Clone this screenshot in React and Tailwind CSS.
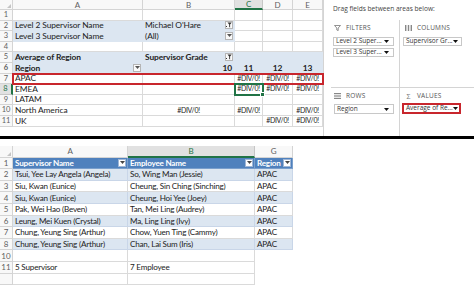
import React from "react";

function Cell({ w, cls = "", children }) {
  return (
    <div
      className={`${w} shrink-0 h-full border-r border-b flex items-center whitespace-nowrap leading-none ${cls}`}
    >
      {children}
    </div>
  );
}

function Hd({ w, sel, children }) {
  return sel ? (
    <Cell w={w} cls="justify-center bg-[#E1E1E1] border-r-[#C6C6C6] border-b-2 border-b-[#217346] text-[#217346] text-[8px]">
      {children}
    </Cell>
  ) : (
    <Cell w={w} cls="justify-center bg-[#F8F8F8] border-[#D4D4D4] text-[#5f5f5f] text-[8px]">
      {children}
    </Cell>
  );
}

function Corner() {
  return (
    <div className="w-[13px] shrink-0 h-full border-r border-b border-[#D4D4D4] bg-[#F8F8F8] flex items-end justify-end p-[1px]">
      <svg width="4" height="4" viewBox="0 0 4 4">
        <path d="M4 0V4H0z" fill="#C4C4C4" />
      </svg>
    </div>
  );
}

function RN({ n, sel, size = "text-[7.5px]" }) {
  return sel ? (
    <Cell w="w-[13px]" cls={`justify-center tracking-normal bg-[#E1E1E1] border-b-[#C6C6C6] border-r-2 border-r-[#217346] text-[#217346] ${size}`}>
      {n}
    </Cell>
  ) : (
    <Cell w="w-[13px]" cls={`justify-center tracking-normal bg-[#F8F8F8] border-[#D4D4D4] text-[#5f5f5f] ${size}`}>
      {n}
    </Cell>
  );
}

function Arrow({ color = "#333" }) {
  return (
    <svg width="5" height="3" viewBox="0 0 5 3">
      <path d="M0 0H5L2.5 3z" fill={color} />
    </svg>
  );
}

function DropBtn() {
  return (
    <span className="ml-auto mr-[1px] w-[8px] h-[8px] border border-[#B5B5B5] bg-[#FAFAFA] flex items-center justify-center">
      <Arrow color="#555" />
    </span>
  );
}

function FilterBtn() {
  return (
    <span className="ml-auto mr-[1px] w-[8px] h-[8px] border border-[#B5B5B5] bg-[#FAFAFA] flex items-center justify-center">
      <svg width="6" height="6" viewBox="0 0 6 6">
        <rect x="0" y="4" width="1" height="1" fill="#333" />
        <path d="M1.5 0.5H5.8L4.1 2.6V5.5L3.2 5V2.6z" fill="#333" />
      </svg>
    </span>
  );
}

const PL = "border-[#DADADA]";
const PV = "bg-[#DCE6F1] border-[#DCE6F1]";
const ERR = "#DIV/0!";
const EC = "justify-center text-[7px] tracking-[-0.3px]";

function TopSheet() {
  return (
    <div className="w-[323px] shrink-0 flex flex-col text-[8.4px] tracking-[-0.1px] text-[#222]">
      <div className="flex h-[10px]">
        <Corner />
        <Hd w="w-[130px]">A</Hd>
        <Hd w="w-[92px]">B</Hd>
        <Hd w="w-[28px]" sel>C</Hd>
        <Hd w="w-[30px]">D</Hd>
        <Hd w="w-[30px]">E</Hd>
      </div>
      <div className="flex h-[10.6px]">
        <RN n="1" />
        <Cell w="w-[130px]" cls={PL} />
        <Cell w="w-[92px]" cls={PL} />
        <Cell w="w-[28px]" cls={PL} />
        <Cell w="w-[30px]" cls={PL} />
        <Cell w="w-[30px]" cls={PL} />
      </div>
      <div className="flex h-[10.6px]">
        <RN n="2" />
        <Cell w="w-[130px]" cls={`${PV} pl-[2px]`}>Level 2 Supervisor Name</Cell>
        <Cell w="w-[92px]" cls={`${PV} pl-[2px]`}>
          Michael O'Hare
          <FilterBtn />
        </Cell>
        <Cell w="w-[28px]" cls={PL} />
        <Cell w="w-[30px]" cls={PL} />
        <Cell w="w-[30px]" cls={PL} />
      </div>
      <div className="flex h-[10.6px]">
        <RN n="3" />
        <Cell w="w-[130px]" cls={`${PV} pl-[2px]`}>Level 3 Supervisor Name</Cell>
        <Cell w="w-[92px]" cls={`${PV} pl-[2px]`}>
          (All)
          <DropBtn />
        </Cell>
        <Cell w="w-[28px]" cls={PL} />
        <Cell w="w-[30px]" cls={PL} />
        <Cell w="w-[30px]" cls={PL} />
      </div>
      <div className="flex h-[10.6px]">
        <RN n="4" />
        <Cell w="w-[130px]" cls={PL} />
        <Cell w="w-[92px]" cls={PL} />
        <Cell w="w-[28px]" cls={PL} />
        <Cell w="w-[30px]" cls={PL} />
        <Cell w="w-[30px]" cls={PL} />
      </div>
      <div className="flex h-[10.6px]">
        <RN n="5" />
        <Cell w="w-[130px]" cls={`${PV} pl-[2px] font-bold`}>Average of Region</Cell>
        <Cell w="w-[92px]" cls={`${PV} pl-[2px] font-bold`}>
          Supervisor Grade
          <FilterBtn />
        </Cell>
        <Cell w="w-[28px]" cls={PV} />
        <Cell w="w-[30px]" cls={PV} />
        <Cell w="w-[30px]" cls={PV} />
      </div>
      <div className="flex h-[10.6px] font-bold">
        <RN n="6" />
        <Cell w="w-[130px]" cls={`${PV} pl-[2px]`}>
          Region
          <DropBtn />
        </Cell>
        <Cell w="w-[92px]" cls={`${PV} justify-end pr-[2px]`}>10</Cell>
        <Cell w="w-[28px]" cls={`${PV} justify-center`}>11</Cell>
        <Cell w="w-[30px]" cls={`${PV} justify-center`}>12</Cell>
        <Cell w="w-[30px]" cls={`${PV} justify-center`}>13</Cell>
      </div>
      <div className="flex h-[10.6px]">
        <RN n="7" />
        <div className="relative flex h-full outline-2 outline-[#C8262D] -outline-offset-1">
          <Cell w="w-[130px]" cls={`${PL} pl-[2px]`}>APAC</Cell>
          <Cell w="w-[92px]" cls={PL} />
          <Cell w="w-[28px]" cls={`${PL} ${EC}`}>{ERR}</Cell>
          <Cell w="w-[30px]" cls={`${PL} ${EC}`}>{ERR}</Cell>
          <Cell w="w-[30px]" cls={`${PL} ${EC}`}>{ERR}</Cell>
        </div>
      </div>
      <div className="flex h-[10.6px]">
        <RN n="8" sel />
        <Cell w="w-[130px]" cls={`${PL} pl-[2px]`}>EMEA</Cell>
        <Cell w="w-[92px]" cls={PL} />
        <Cell w="w-[28px]" cls={`${PL} relative ${EC} outline-2 outline-[#217346] -outline-offset-1`}>
          {ERR}
          <span className="absolute right-[-3px] bottom-[-3px] w-[5px] h-[5px] bg-[#217346] border border-white" />
        </Cell>
        <Cell w="w-[30px]" cls={`${PL} ${EC}`}>{ERR}</Cell>
        <Cell w="w-[30px]" cls={`${PL} ${EC}`}>{ERR}</Cell>
      </div>
      <div className="flex h-[10.6px]">
        <RN n="9" />
        <Cell w="w-[130px]" cls={`${PL} pl-[2px]`}>LATAM</Cell>
        <Cell w="w-[92px]" cls={PL} />
        <Cell w="w-[28px]" cls={PL} />
        <Cell w="w-[30px]" cls={PL} />
        <Cell w="w-[30px]" cls={PL} />
      </div>
      <div className="flex h-[10.6px]">
        <RN n="10" />
        <Cell w="w-[130px]" cls={`${PL} pl-[2px]`}>North America</Cell>
        <Cell w="w-[92px]" cls={`${PL} ${EC}`}>{ERR}</Cell>
        <Cell w="w-[28px]" cls={`${PL} ${EC}`}>{ERR}</Cell>
        <Cell w="w-[30px]" cls={PL} />
        <Cell w="w-[30px]" cls={`${PL} ${EC}`}>{ERR}</Cell>
      </div>
      <div className="flex h-[10.6px]">
        <RN n="11" />
        <Cell w="w-[130px]" cls={`${PL} pl-[2px]`}>UK</Cell>
        <Cell w="w-[92px]" cls={PL} />
        <Cell w="w-[28px]" cls={PL} />
        <Cell w="w-[30px]" cls={`${PL} ${EC}`}>{ERR}</Cell>
        <Cell w="w-[30px]" cls={`${PL} ${EC}`}>{ERR}</Cell>
      </div>
    </div>
  );
}

function FieldBox({ children, cls }) {
  return (
    <div className={`h-[9px] bg-white flex items-center pl-[2px] pr-[4px] text-[6.5px] leading-none text-[#333] whitespace-nowrap ${cls}`}>
      <span>{children}</span>
      <span className="ml-auto">
        <Arrow color="#111" />
      </span>
    </div>
  );
}

function Heading({ icon, children }) {
  return (
    <div className="h-[10px] flex items-center gap-[5px] text-[6.5px] leading-none text-[#555] tracking-[0.2px]">
      <span className="w-[7px] flex items-center justify-center">{icon}</span>
      <span>{children}</span>
    </div>
  );
}

const FunnelIcon = (
  <svg width="7" height="6" viewBox="0 0 7 6">
    <path d="M0.5 0.5H6.5L4.2 3V5.6L2.8 5V3z" fill="none" stroke="#777" strokeWidth="0.8" />
  </svg>
);
const ColsIcon = (
  <svg width="7" height="6" viewBox="0 0 7 6">
    <rect x="0" y="0" width="1.4" height="6" fill="#888" />
    <rect x="2.8" y="0" width="1.4" height="6" fill="#888" />
    <rect x="5.6" y="0" width="1.4" height="6" fill="#888" />
  </svg>
);
const RowsIcon = (
  <svg width="7" height="6" viewBox="0 0 7 6">
    <rect x="0" y="0" width="7" height="1.2" fill="#888" />
    <rect x="0" y="2.4" width="7" height="1.2" fill="#888" />
    <rect x="0" y="4.8" width="7" height="1.2" fill="#888" />
  </svg>
);
const SigmaIcon = <span className="text-[7px] text-[#777] leading-none">Σ</span>;

function Panel() {
  return (
    <div className="flex-1 border-l border-[#D4D4D4] flex flex-col bg-white font-['Open_Sans','Noto_Sans',sans-serif]">
      <div className="h-[20px] pl-[9px] pt-[6px] text-[6.6px] leading-none text-[#444] whitespace-nowrap">
        Drag fields between areas below:
      </div>
      <div className="flex h-[67px]">
        <div className="w-[75px] pt-[3px]">
          <div className="pl-[10px]">
            <Heading icon={FunnelIcon}>FILTERS</Heading>
          </div>
          <div className="pl-[9px] pt-[4px] flex flex-col gap-[2px]">
            <FieldBox cls="w-[61px] border border-[#C8C8C8]">Level 2 Super...</FieldBox>
            <FieldBox cls="w-[61px] border border-[#C8C8C8]">Level 3 Super...</FieldBox>
          </div>
        </div>
        <div className="flex-1 border-l border-[#D4D4D4] pt-[3px]">
          <div className="pl-[5px]">
            <Heading icon={ColsIcon}>COLUMNS</Heading>
          </div>
          <div className="pl-[3px] pt-[4px]">
            <FieldBox cls="w-[59px] border border-[#C8C8C8]">Supervisor Gr...</FieldBox>
          </div>
        </div>
      </div>
      <div className="flex flex-1 ml-[7px] border-t border-[#D4D4D4]">
        <div className="w-[68px] pt-[3px]">
          <div className="pl-[3px]">
            <Heading icon={RowsIcon}>ROWS</Heading>
          </div>
          <div className="pl-[3px] pt-[3px]">
            <FieldBox cls="w-[60px] h-[10px] border border-[#C8C8C8]">Region</FieldBox>
          </div>
        </div>
        <div className="flex-1 border-l border-[#D4D4D4] pt-[3px]">
          <div className="pl-[5px]">
            <Heading icon={SigmaIcon}>VALUES</Heading>
          </div>
          <div className="pl-[2px] pt-[2px]">
            <FieldBox cls="w-[59px] h-[11px] border-2 border-[#C8262D]">Average of Re...</FieldBox>
          </div>
        </div>
      </div>
    </div>
  );
}

function TblHdBtn() {
  return (
    <span className="ml-auto mr-[1px] w-[8px] h-[8px] bg-white border border-[#9FB6D6] flex items-center justify-center">
      <Arrow color="#444" />
    </span>
  );
}

const DATA = [
  [2, "Tsui, Yee Lay Angela (Angela)", "So, Wing Man (Jessie)", "APAC"],
  [3, "Siu, Kwan (Eunice)", "Cheung, Sin Ching (Sinching)", "APAC"],
  [4, "Siu, Kwan (Eunice)", "Cheung, Hoi Yee (Joey)", "APAC"],
  [5, "Pak, Wei Hao (Beven)", "Tan, Mei Ling (Audrey)", "APAC"],
  [6, "Leung, Mei Kuen (Crystal)", "Ma, Ling Ling (Ivy)", "APAC"],
  [7, "Chung, Yeung Sing (Arthur)", "Chow, Yuen Ting (Cammy)", "APAC"],
  [8, "Chung, Yeung Sing (Arthur)", "Chan, Lai Sum (Iris)", "APAC"],
];

function BottomSheet() {
  return (
    <div className="flex flex-col text-[8.1px] tracking-[-0.2px] text-[#222] flex-1 overflow-hidden">
      <div className="flex h-[11.6px] shrink-0">
        <Corner />
        <Hd w="w-[115px]">A</Hd>
        <Hd w="w-[127px]" sel>B</Hd>
        <Hd w="w-[38px]">G</Hd>
      </div>
      <div className="flex h-[11.6px] shrink-0">
        <RN n="1" size="text-[8px]" />
        <Cell w="w-[115px]" cls="bg-[#4F81BD] border-[#7A9FCC] pl-[2px] text-white font-bold">
          Supervisor Name
          <TblHdBtn />
        </Cell>
        <Cell w="w-[127px]" cls="bg-[#4F81BD] border-[#7A9FCC] pl-[2px] text-white font-bold">
          Employee Name
          <TblHdBtn />
        </Cell>
        <Cell w="w-[38px]" cls="bg-[#4F81BD] border-[#7A9FCC] pl-[2px] text-white font-bold">
          Region
          <TblHdBtn />
        </Cell>
      </div>
      {DATA.map(([n, a, b, g]) => {
        const c = n % 2 === 0 ? "bg-[#DCE6F1] border-[#C9D6E8]" : "bg-white border-[#DADADA]";
        return (
          <div key={n} className="flex h-[11.6px] shrink-0">
            <RN n={n} size="text-[8px]" />
            <Cell w="w-[115px]" cls={`${c} pl-[2px]`}>{a}</Cell>
            <Cell w="w-[127px]" cls={`${c} pl-[2px]`}>{b}</Cell>
            <Cell w="w-[38px]" cls={`${c} pl-[2px]`}>{g}</Cell>
          </div>
        );
      })}
      <div className="flex h-[11.6px] shrink-0">
        <RN n="10" size="text-[8px]" />
        <Cell w="w-[115px]" cls={PL} />
        <Cell w="w-[127px]" cls={PL} />
      </div>
      <div className="flex h-[11.6px] shrink-0">
        <RN n="11" size="text-[8px]" />
        <Cell w="w-[115px]" cls={`${PL} pl-[2px]`}>5 Supervisor</Cell>
        <Cell w="w-[127px]" cls={`${PL} pl-[2px]`}>7 Employee</Cell>
      </div>
      <div className="flex h-[11.6px] shrink-0">
        <RN n="" size="text-[8px]" />
        <Cell w="w-[115px]" cls={PL} />
        <Cell w="w-[127px]" cls={PL} />
      </div>
    </div>
  );
}

export default function App() {
  return (
    <div className="w-[474px] h-[291px] overflow-hidden bg-white flex flex-col font-['Lato','Liberation_Sans',sans-serif]">
      <div className="flex h-[136px] shrink-0">
        <TopSheet />
        <Panel />
      </div>
      <div className="h-[3px] bg-black shrink-0" />
      <div className="h-[7px] shrink-0" />
      <BottomSheet />
    </div>
  );
}
